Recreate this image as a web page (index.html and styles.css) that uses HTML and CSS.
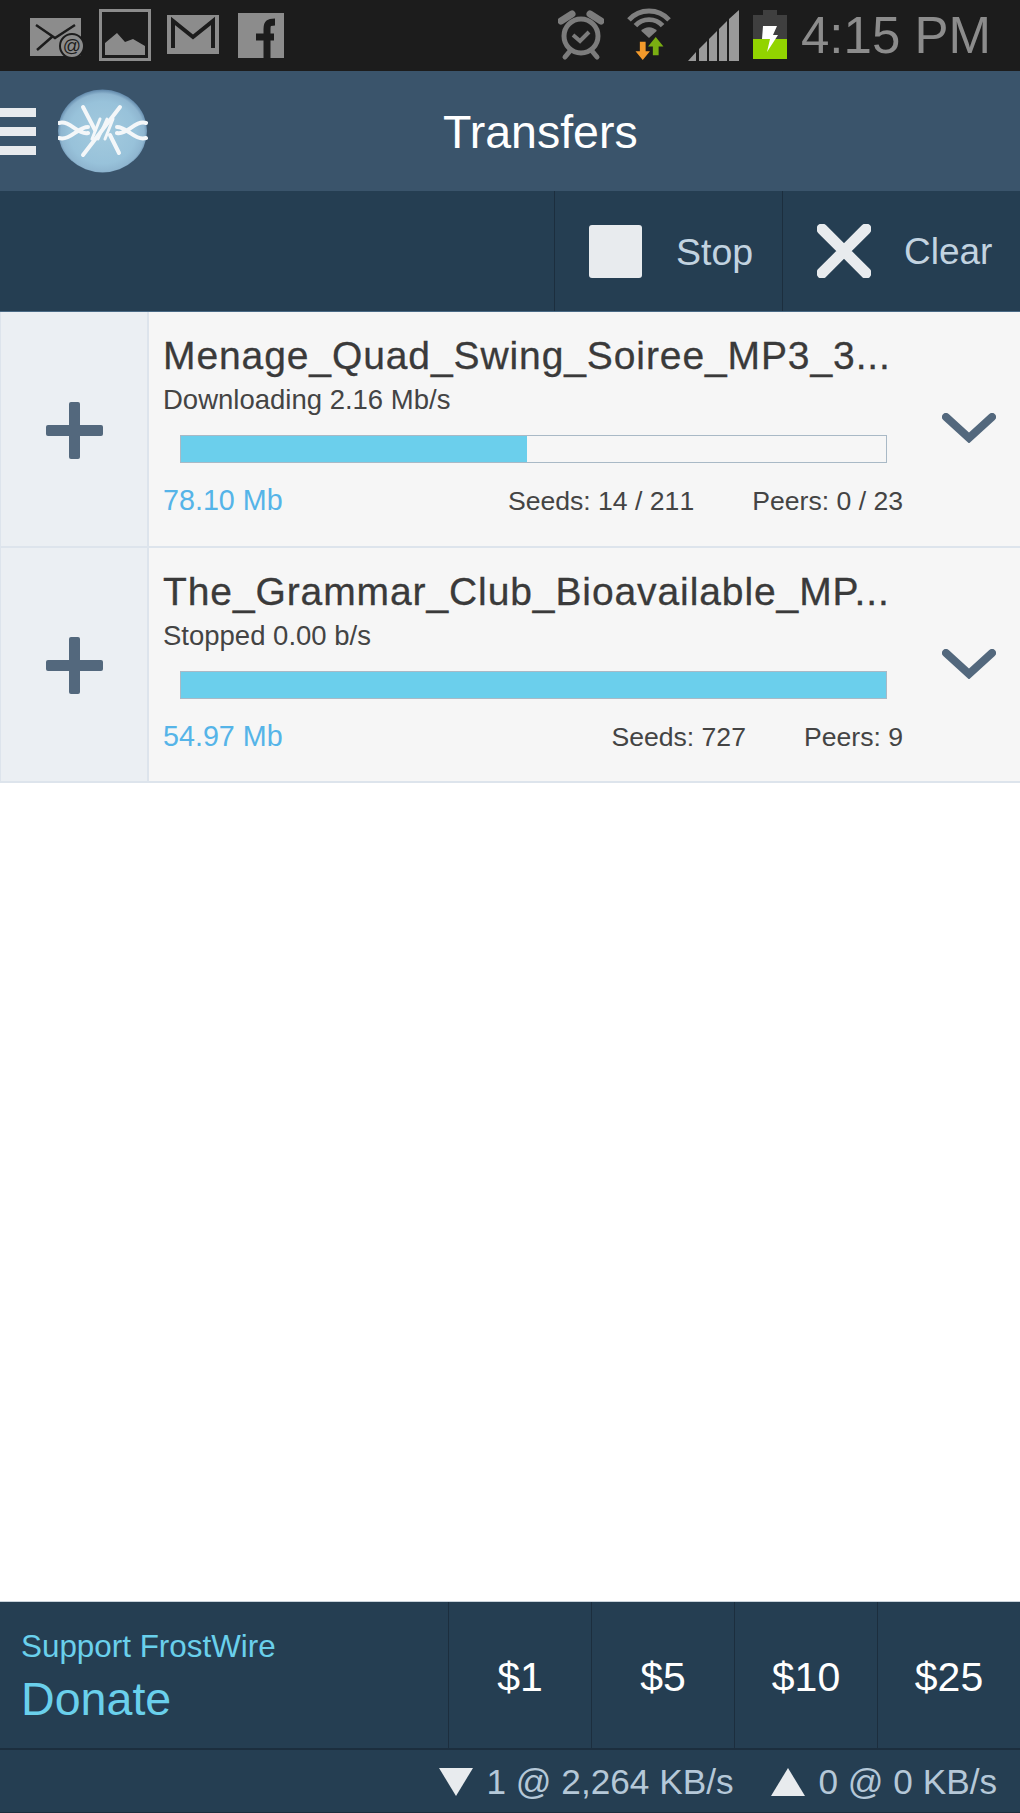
FILE: index.html
```html
<!DOCTYPE html>
<html lang="en">

<head>
    <meta charset="UTF-8">
    <meta name="viewport" content="width=device-width, initial-scale=1.0">
    <title>Transfers</title>
    <link rel="stylesheet" href="styles.css">
</head>

<body>
    <div class="status-bar">
        <svg class="icon-mail" viewBox="0 0 56 52">
            <rect x="0" y="9" width="51" height="38" fill="#8c8c8c" />
            <path d="M6 16 L25 29 L45 16 M7 41 L23 27" fill="none" stroke="#1c1c1c" stroke-width="2.5" />
            <circle cx="42" cy="37" r="12" fill="#8c8c8c" stroke="#1c1c1c" stroke-width="2" />
            <text class="icon-at" x="42" y="43">@</text>
        </svg>
        <svg class="icon-picture" viewBox="0 0 52 52">
            <rect x="1.5" y="1.5" width="49" height="49" fill="none" stroke="#8c8c8c" stroke-width="3" />
            <path d="M6 46 V34 L18 24 L26 33 L34 30 L46 37 V46 Z" fill="#8c8c8c" />
        </svg>
        <svg class="icon-gmail" viewBox="0 0 52 52">
            <rect x="0" y="6" width="52" height="39" fill="#8c8c8c" />
            <path d="M6 39 V12 L26 28 L46 12 V39" fill="none" stroke="#1c1c1c" stroke-width="4" />
        </svg>
        <svg class="icon-fb" viewBox="0 0 46 52">
            <rect x="0" y="4" width="46" height="45" fill="#8c8c8c" />
            <path d="M29 49 V20 C29 14 31 13 37 13 M18 28 H36" fill="none" stroke="#1c1c1c" stroke-width="7" />
        </svg>

        <svg class="icon-alarm" viewBox="0 0 46 52">
            <path d="M3 12 L14 5 M43 12 L32 5" stroke="#7c7c7c" stroke-width="7" stroke-linecap="round" />
            <circle cx="23" cy="27" r="17" fill="none" stroke="#7c7c7c" stroke-width="5" />
            <path d="M15 26 L22 32 L31 23" fill="none" stroke="#7c7c7c" stroke-width="4" />
            <path d="M12 42 L7 48 M34 42 L39 48" stroke="#7c7c7c" stroke-width="5" stroke-linecap="round" />
        </svg>
        <svg class="icon-wifi" viewBox="0 0 46 54">
            <path d="M23 30 L14.8 22.6 A11 11 0 0 1 31.2 22.6 Z" fill="#808080" />
            <path d="M8.9 17.3 A19 19 0 0 1 37.1 17.3" fill="none" stroke="#808080" stroke-width="5" />
            <path d="M2.2 11.3 A28 28 0 0 1 43.8 11.3" fill="none" stroke="#808080" stroke-width="5" />
            <path d="M13.5 34 H19.5 V44 H24 L16.5 53 L9 44 H13.5 Z" fill="#f39a2b" />
            <path d="M30 29 L38 39 H33 V48 H27 V39 H22 Z" fill="#7aae12" />
        </svg>
        <svg class="icon-signal" viewBox="0 0 52 52">
            <path d="M1 52 H9 V43 Z M12 52 H20 V32 L12 40 Z M22 52 H30 V22 L22 30 Z M32 52 H40 V12 L32 20 Z M42 52 H52 V1 L42 10 Z" fill="#9a9a9a" />
        </svg>
        <svg class="icon-battery" viewBox="0 0 34 52">
            <rect x="10" y="1" width="14" height="6" fill="#3f3f3f" />
            <rect x="0" y="6" width="34" height="24" fill="#3f3f3f" />
            <rect x="0" y="30" width="34" height="20" fill="#92d400" />
            <path d="M10 17 H24 L20 26 H25 L14 43 L17 30 H9 Z" fill="#fff" />
        </svg>
        <span class="clock">4:15 PM</span>
    </div>

    <div class="app-header">
        <div class="menu-icon">
            <span></span>
            <span></span>
            <span></span>
        </div>
        <svg class="logo" viewBox="0 0 90 90">
            <defs>
                <radialGradient id="globe" cx="50%" cy="52%" r="52%">
                    <stop offset="0%" stop-color="#a3cade" />
                    <stop offset="72%" stop-color="#98c2da" />
                    <stop offset="90%" stop-color="#8fb6d0" />
                    <stop offset="100%" stop-color="#5f86a8" />
                </radialGradient>
            </defs>
            <ellipse cx="44.5" cy="45" rx="44.5" ry="41.5" fill="url(#globe)" />
            <g fill="none" stroke="#f4f7f9" stroke-width="4" stroke-linecap="round">
                <path d="M1 37 C12 34 20 49 30 47 M1 52 C12 55 20 41 30 41" />
                <path d="M88 37 C77 34 69 49 59 47 M88 52 C77 55 69 41 59 41" />
                <path d="M62 21 L25 69 M25 21 L37 44 M52 49 L61 67" />
                <path d="M42 33 L34 53 M49 33 L40 53 M55 33 L47 53" stroke-width="3" />
            </g>
        </svg>
        <h1 class="page-title">Transfers</h1>
    </div>

    <div class="toolbar">
        <div class="tool-btn tool-stop">
            <span class="stop-icon"></span>
            <span class="tool-label">Stop</span>
        </div>
        <div class="tool-btn tool-clear">
            <svg class="clear-icon" viewBox="0 0 54 54">
                <path d="M5 5 L49 49 M49 5 L5 49" stroke="#e8ebee" stroke-width="11" stroke-linecap="round" />
            </svg>
            <span class="tool-label tool-label-clear">Clear</span>
        </div>
    </div>

    <div class="transfers">
        <div class="transfer-row">
            <div class="expand-cell">
                <span class="plus-icon"></span>
            </div>
            <div class="transfer-main">
                <div class="transfer-name">Menage_Quad_Swing_Soiree_MP3_3...</div>
                <div class="transfer-state">Downloading 2.16 Mb/s</div>
                <div class="progress">
                    <div class="progress-fill" style="width: 49.1%"></div>
                </div>
                <div class="transfer-stats">
                    <span class="transfer-size">78.10 Mb</span>
                    <span class="seeds">Seeds: 14 / 211</span>
                    <span class="peers">Peers: 0 / 23</span>
                </div>
            </div>
            <svg class="chevron" viewBox="0 0 54 30">
                <path d="M4 4 L27 25 L50 4" fill="none" stroke="#53687d" stroke-width="8" stroke-linecap="round" />
            </svg>
        </div>
        <div class="transfer-row">
            <div class="expand-cell">
                <span class="plus-icon"></span>
            </div>
            <div class="transfer-main">
                <div class="transfer-name">The_Grammar_Club_Bioavailable_MP...</div>
                <div class="transfer-state">Stopped 0.00 b/s</div>
                <div class="progress">
                    <div class="progress-fill" style="width: 100%"></div>
                </div>
                <div class="transfer-stats">
                    <span class="transfer-size">54.97 Mb</span>
                    <span class="seeds">Seeds: 727</span>
                    <span class="peers">Peers: 9</span>
                </div>
            </div>
            <svg class="chevron" viewBox="0 0 54 30">
                <path d="M4 4 L27 25 L50 4" fill="none" stroke="#53687d" stroke-width="8" stroke-linecap="round" />
            </svg>
        </div>
    </div>

    <div class="donate-bar">
        <div class="donate-text">
            <div class="donate-support">Support FrostWire</div>
            <div class="donate-title">Donate</div>
        </div>
        <div class="donate-btn">$1</div>
        <div class="donate-btn">$5</div>
        <div class="donate-btn">$10</div>
        <div class="donate-btn">$25</div>
    </div>

    <div class="speed-bar">
        <svg class="speed-down" viewBox="0 0 34 28">
            <path d="M0 0 H34 L17 28 Z" fill="#e8ebee" />
        </svg>
        <span class="speed-text">1 @ 2,264 KB/s</span>
        <svg class="speed-up" viewBox="0 0 34 28">
            <path d="M17 0 L34 28 H0 Z" fill="#e8ebee" />
        </svg>
        <span class="speed-text">0 @ 0 KB/s</span>
    </div>
</body>

</html>
```

FILE: styles.css
```css
* {
    box-sizing: border-box;
}

body {
    font-family: "Liberation Sans", Arial, sans-serif;
    background-color: #fff;
    margin: 0;
    padding: 0;
    height: 100vh;
    display: flex;
    flex-direction: column;
    overflow: hidden;
}

/* phone status bar */
.status-bar {
    display: flex;
    align-items: flex-start;
    flex: none;
    height: 71px;
    padding: 9px 0 0 30px;
    background-color: #1c1c1c;
}

.status-bar svg {
    flex: none;
    height: 52px;
}

.icon-mail {
    width: 56px;
}

.icon-picture {
    width: 52px;
    margin-left: 13px;
}

.icon-gmail {
    width: 52px;
    margin-left: 16px;
}

.icon-fb {
    width: 46px;
    margin-left: 19px;
}

.icon-alarm {
    width: 46px;
    margin-left: 274px;
}

.icon-wifi {
    width: 46px;
    margin-left: 22px;
    overflow: visible;
}

.icon-signal {
    width: 52px;
    margin-left: 15px;
}

.icon-battery {
    width: 34px;
    margin-left: 14px;
}

.icon-at {
    font-size: 18px;
    text-anchor: middle;
    fill: #1c1c1c;
}

.clock {
    margin: 5px 0 0 14px;
    font-size: 51px;
    line-height: 44px;
    color: #8c8c8c;
}

/* app header */
.app-header {
    display: flex;
    align-items: center;
    flex: none;
    height: 120px;
    background-color: #3a546b;
}

.menu-icon {
    display: flex;
    flex-direction: column;
    gap: 10px;
    width: 36px;
    margin-right: 22px;
}

.menu-icon span {
    display: block;
    height: 9px;
    background-color: #e8ebee;
}

.logo {
    flex: none;
    width: 90px;
    height: 90px;
}

.page-title {
    margin: 2px 0 0 295px;
    font-size: 46.5px;
    font-weight: normal;
    color: #fff;
}

.toolbar {
    display: flex;
    justify-content: flex-end;
    flex: none;
    height: 121px;
    background-color: #253e52;
    border-bottom: 1px solid #4a6a85;
}

.tool-btn {
    display: flex;
    align-items: center;
    border-left: 1px solid #1c2e3e;
}

.tool-stop {
    width: 228px;
    padding-left: 34px;
}

.tool-clear {
    width: 238px;
    padding-left: 34px;
}

.stop-icon {
    display: block;
    width: 53px;
    height: 53px;
    border-radius: 3px;
    background-color: #e8ebee;
}

.clear-icon {
    width: 54px;
    height: 54px;
}

.tool-label {
    margin: 2px 0 0 34px;
    font-size: 37.5px;
    color: #c2d3e0;
}

.tool-label-clear {
    margin-left: 33px;
    font-size: 37px;
}

/* transfer list */
.transfers {
    flex: 1;
}

.transfer-row {
    display: flex;
    height: 235.5px;
    background-color: #f6f6f6;
    border-bottom: 2px solid #dde4ec;
}

.expand-cell {
    display: flex;
    align-items: center;
    justify-content: center;
    flex: none;
    width: 149px;
    padding-top: 3px;
    background-color: #ebeff3;
    border-left: 1px solid #dde4ec;
    border-right: 2px solid #dde4ec;
}

.plus-icon {
    position: relative;
    display: block;
    width: 57px;
    height: 57px;
}

.plus-icon::before,
.plus-icon::after {
    content: "";
    position: absolute;
    background-color: #53687d;
    border-radius: 2px;
}

.plus-icon::before {
    left: 0;
    top: 23px;
    width: 57px;
    height: 11px;
}

.plus-icon::after {
    left: 23px;
    top: 0;
    width: 11px;
    height: 57px;
}

.transfer-main {
    flex: none;
    width: 740px;
    margin-left: 14px;
    padding-top: 20px;
}

.transfer-name {
    font-size: 39px;
    line-height: 48px;
    letter-spacing: 0.9px;
    color: #3a3a3a;
    white-space: nowrap;
    -webkit-text-stroke: 0.3px #3a3a3a;
}

.transfer-state {
    margin-top: 4px;
    font-size: 27.5px;
    line-height: 32px;
    color: #444;
}

.progress {
    width: 707px;
    height: 28px;
    margin: 19px 0 0 17px;
    border: 1px solid #a9b9c6;
    background-color: #f6f6f6;
}

.progress-fill {
    height: 100%;
    background-color: #6bcfec;
}

.transfer-stats {
    display: flex;
    align-items: baseline;
    margin-top: 21px;
    font-size: 26.6px;
    font-kerning: none;
    color: #444;
}

.transfer-size {
    margin-right: auto;
    font-size: 28.7px;
    font-kerning: auto;
    color: #55b4e8;
}

.peers {
    margin-left: 58px;
}

.chevron {
    flex: none;
    width: 54px;
    height: 30px;
    margin: 101px 0 0 39px;
}

/* donate footer */
.donate-bar {
    display: flex;
    flex: none;
    height: 149px;
    background-color: #253e52;
    border-top: 1px solid #c9d3db;
    border-bottom: 2px solid #1c2e3e;
}

.donate-text {
    flex: none;
    width: 448px;
    padding: 26px 0 0 21px;
    color: #6ad0ec;
}

.donate-support {
    font-size: 31.4px;
    line-height: 38px;
}

.donate-title {
    font-size: 46.6px;
    line-height: 66px;
}

.donate-btn {
    display: flex;
    align-items: center;
    justify-content: center;
    flex: none;
    width: 143px;
    padding-top: 4px;
    border-left: 1px solid #1c2e3e;
    font-size: 41px;
    color: #fff;
}

.speed-bar {
    display: flex;
    align-items: center;
    justify-content: flex-end;
    flex: none;
    height: 63px;
    padding: 2px 23px 0 0;
    background-color: #253e52;
    border-bottom: 1px solid #1c2e3e;
}

.speed-down,
.speed-up {
    flex: none;
    width: 34px;
    height: 28px;
}

.speed-up {
    margin-left: 37px;
}

.speed-text {
    margin-left: 14px;
    font-size: 35.2px;
    color: #b5c8d8;
}
```
